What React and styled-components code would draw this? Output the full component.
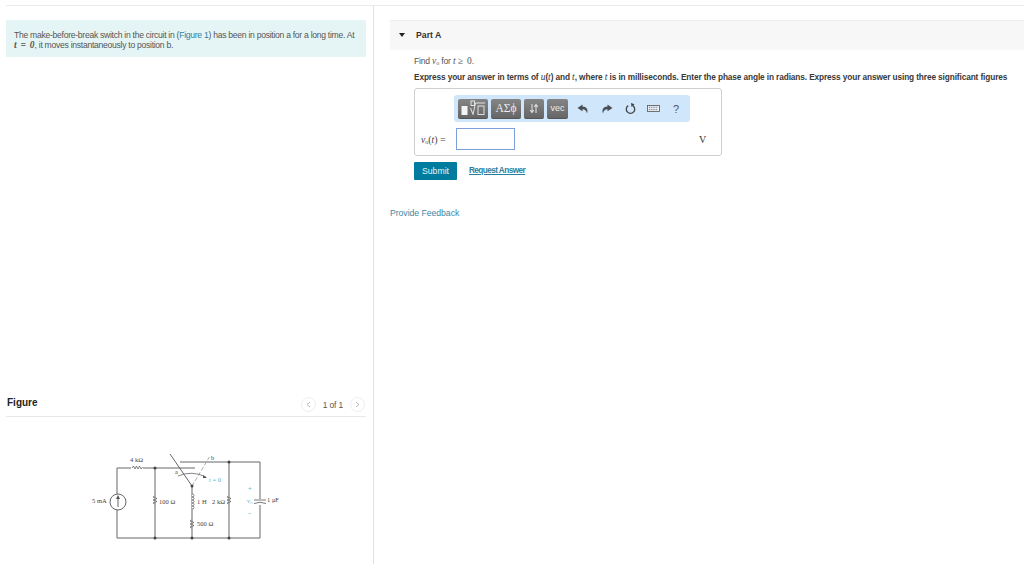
import React from 'react';
import styled, { createGlobalStyle } from 'styled-components';

const Global = createGlobalStyle`
  html, body { margin: 0; padding: 0; background: #fff; }
  body { font-family: "Liberation Sans", Arial, sans-serif; color: #333; overflow: hidden; }
`;

const Page = styled.div`
  width: 1024px;
  height: 564px;
  display: flex;
  flex-direction: column;
  padding: 5px 0 0 6px;
  box-sizing: border-box;
`;
const Main = styled.div`
  flex: 1;
  display: flex;
  border-top: 1px solid #e8ebee;
  min-height: 0;
`;
const LeftColumn = styled.div`
  width: 368px;
  box-sizing: border-box;
  border-right: 1px solid #dde2e8;
  display: flex;
  flex-direction: column;
  padding: 14px 7px 0 0;
`;
const Intro = styled.div`
  width: 360px;
  height: 37px;
  box-sizing: border-box;
  background: #e5f5f6;
  padding: 10px 0 0 8px;
  font-size: 8.6px;
  letter-spacing: -0.28px;
  line-height: 10px;
  color: #555;
`;
const FigureLink = styled.span`color: #2b7f9e;`;
const Math = styled.span`
  font-family: "Liberation Serif", serif;
  font-size: 9.5px;
  letter-spacing: 0;
  word-spacing: ${p => (p.$wide ? 1.5 : 0)}px;
  font-style: ${p => (p.$plain ? 'normal' : 'italic')};
  font-weight: ${p => (p.$bold ? 700 : 400)};
`;
const Sub = styled.sub`
  font-family: "Liberation Serif", serif;
  font-size: 6px;
  line-height: 0;
  vertical-align: -1px;
`;
const FigureHeader = styled.div`
  margin-top: auto;
  width: 360px;
  height: 21px;
  box-sizing: border-box;
  border-bottom: 1px solid #e6e8ea;
  display: flex;
  align-items: flex-start;
  justify-content: space-between;
`;
const FigureTitle = styled.div`
  font-size: 10px;
  font-weight: 700;
  line-height: 12px;
  color: #222;
  margin: 1px 0 0 1px;
`;
const Pager = styled.div`
  display: flex;
  align-items: center;
  gap: 7px;
  font-size: 8.4px;
  letter-spacing: -0.1px;
  color: #555;
  margin: 1px 1px 0 0;
`;
const PagerButton = styled.div`
  width: 13px;
  height: 13px;
  border-radius: 50%;
  border: 1px solid #eceef0;
  display: flex;
  align-items: center;
  justify-content: center;
`;
const FigureArea = styled.div`
  height: 147px;
  padding: 28px 0 0 84px;
  box-sizing: border-box;
`;
const RightColumn = styled.div`
  flex: 1;
  padding: 14px 0 0 16px;
  min-width: 0;
`;
const PartHeader = styled.div`
  height: 30px;
  background: #f7f7f7;
  border-top: 1px solid #eeeeee;
  box-sizing: border-box;
  display: flex;
  align-items: center;
  padding: 0 0 1px 9px;
  gap: 11px;
`;
const Caret = styled.div`
  width: 0;
  height: 0;
  border-left: 3.5px solid transparent;
  border-right: 3.5px solid transparent;
  border-top: 4px solid #222;
`;
const PartTitle = styled.div`
  font-size: 8.7px;
  font-weight: 700;
  color: #333;
`;
const PartBody = styled.div`
  padding: 6px 0 0 24px;
`;
const Prompt = styled.div`
  font-size: 8.6px;
  letter-spacing: -0.2px;
  line-height: 10px;
  color: #555;
`;
const Instruction = styled.div`
  font-size: 8.3px;
  letter-spacing: -0.12px;
  line-height: 10px;
  font-weight: 700;
  color: #3a3a3a;
  margin-top: 6px;
  white-space: nowrap;
`;
const AnswerBox = styled.div`
  width: 308px;
  height: 68px;
  box-sizing: border-box;
  margin-top: 6px;
  border: 1px solid #cfcfcf;
  border-radius: 3px;
  padding: 6px 0 0 6px;
`;
const ToolbarRow = styled.div`
  display: flex;
  justify-content: flex-start;
  padding-left: 33px;
`;
const Toolbar = styled.div`
  width: 236px;
  height: 27px;
  box-sizing: border-box;
  background: #cfe6fb;
  border-radius: 3px;
  display: flex;
  align-items: center;
  padding-left: 4px;
  gap: 3px;
`;
const ToolButton = styled.div`
  width: ${p => p.$w}px;
  height: 20px;
  box-sizing: border-box;
  border-radius: 2px;
  background: linear-gradient(#858585, #666);
  border-bottom: 1px solid #555;
  color: #eee;
  font-family: ${p => (p.$serif ? '"Liberation Serif", serif' : '"Liberation Sans", sans-serif')};
  font-size: ${p => (p.$serif ? 11.5 : 9)}px;
  display: flex;
  align-items: center;
  justify-content: center;
`;
const ToolIcon = styled.div`
  width: ${p => p.$w}px;
  height: 20px;
  display: flex;
  align-items: center;
  justify-content: center;
  font-size: 11px;
  color: #555;
`;
const InputRow = styled.div`
  display: flex;
  align-items: center;
  margin-top: 6px;
  height: 22px;
`;
const Label = styled.div`
  width: 35px;
  font-family: "Liberation Serif", serif;
  font-size: 10px;
  color: #444;
  white-space: nowrap;
`;
const Field = styled.div`
  width: 59px;
  height: 22px;
  box-sizing: border-box;
  border: 1px solid #7d9fdc;
`;
const Unit = styled.div`
  margin-left: 184px;
  font-family: "Liberation Serif", serif;
  font-size: 10px;
  color: #333;
`;
const Actions = styled.div`
  display: flex;
  align-items: center;
  margin-top: 6px;
  gap: 12px;
`;
const Submit = styled.div`
  width: 43px;
  height: 18px;
  background: #007c9e;
  border-radius: 1px;
  color: #e8f4f7;
  font-size: 8.7px;
  display: flex;
  align-items: center;
  justify-content: center;
`;
const RequestLink = styled.div`
  font-size: 8.2px;
  font-weight: 700;
  letter-spacing: -0.55px;
  color: #2b7f9e;
  text-decoration: underline;
  margin-top: -2px;
`;
const Feedback = styled.div`
  margin-top: 28px;
  font-size: 8.7px;
  letter-spacing: -0.05px;
  line-height: 10px;
  color: #3f87a3;
`;

const Chevron = ({ left }) => (
  <svg width="7" height="7" viewBox="0 0 7 7" fill="none" stroke="#bbb" strokeWidth="1">
    <path d={left ? 'M5 1 L2 3.5 L5 6' : 'M2 1 L5 3.5 L2 6'} />
  </svg>
);

const Resistor = ({ x, y }) => (
  <path d={`M${x} ${y} l-2 1 l4 1.5 l-4 1.5 l4 1.5 l-4 1.5 l2 1`} fill="#fff" stroke="#555" strokeWidth="0.7" />
);

const T = styled.text`
  font-family: "Liberation Serif", serif;
  font-size: 6.5px;
  fill: #444;
`;
const Teal = styled(T)`
  fill: #5cb5d0;
`;

const Circuit = () => (
  <svg width="200" height="100" viewBox="90 445 200 100">
    <g fill="none" stroke="#666" strokeWidth="1">
      <path d="M195 468 H117 V538 H260 V462 H180" />
      <path d="M155 468 V538" />
      <path d="M192 485 V538" />
      <path d="M229 462 V538" />
      <circle cx="118" cy="502" r="8" fill="#fff" />
      <path d="M118 507 V498" />
    </g>
    <path d="M118 495 l-2 4 h4 z" fill="#555" />
    <path d="M170 454 L192 486" stroke="#555" strokeWidth="0.9" fill="none" />
    <path d="M192 486 L210 456" stroke="#999" strokeWidth="0.8" strokeDasharray="4 2" fill="none" />
    <path d="M178 476 Q192 470 206 477" stroke="#555" strokeWidth="0.7" fill="none" />
    <path d="M207 478 l-4 -3 l0 3 z" fill="#555" />
    <g fill="#444">
      <circle cx="155" cy="468" r="1.5" /><circle cx="229" cy="462" r="1.5" /><circle cx="192" cy="486" r="1.5" />
      <circle cx="155" cy="538" r="1.5" /><circle cx="192" cy="538" r="1.5" /><circle cx="229" cy="538" r="1.5" />
    </g>
    <rect x="131" y="465" width="12" height="4" fill="#fff" />
    <path d="M132 468 l1.5 -2 l1.5 3 l1.5 -3 l1.5 3 l1.5 -3 l1.5 3 l1.5 -2" fill="none" stroke="#555" strokeWidth="0.7" />
    <Resistor x={155} y={496} />
    <Resistor x={229} y={496} />
    <Resistor x={192} y={520} />
    <path d="M192 494 a2 1.5 0 0 1 0 3 a2 1.5 0 0 1 0 3 a2 1.5 0 0 1 0 3 a2 1.5 0 0 1 0 3 a2 1.5 0 0 1 0 3" fill="#fff" stroke="#555" strokeWidth="0.7" />
    <rect x="254" y="499" width="12" height="6" fill="#fff" />
    <path d="M254 500 H266 M254 503.5 Q260 501 266 503.5" stroke="#555" strokeWidth="0.8" fill="none" />
    <T x="130" y="462">4 kΩ</T>
    <T x="92" y="503">5 mA</T>
    <T x="159" y="504">100 Ω</T>
    <T x="197" y="504">1 H</T>
    <T x="212" y="504">2 kΩ</T>
    <T x="197" y="526">500 Ω</T>
    <T x="175" y="474">a</T>
    <T x="211" y="460">b</T>
    <T x="267" y="502">1 μF</T>
    <Teal x="209" y="482">t = 0</Teal>
    <Teal x="247" y="503">v₀</Teal>
    <Teal x="248" y="491" fontWeight="700">+</Teal>
    <Teal x="248" y="516" fontWeight="700">−</Teal>
  </svg>
);

const Undo = ({ flip }) => (
  <svg width="12" height="10" viewBox="0 0 12 10" style={flip ? { transform: 'scaleX(-1)' } : undefined}>
    <path d="M5.5 0.5 L0.5 4 L5.5 7.2 V5.2 C8 5.2 9.2 6.5 10 9.5 C11.5 5.5 9.5 2.7 5.5 2.6 Z" fill="#4a4f55" />
  </svg>
);

export default function App() {
  return (
    <>
      <Global />
      <Page>
        <Main>
          <LeftColumn>
            <Intro>
              The make-before-break switch in the circuit in (<FigureLink>Figure 1</FigureLink>) has been in position a for a long time. At<br />
              <Math $bold $wide>t = 0</Math>, it moves instantaneously to position b.
            </Intro>
            <FigureHeader>
              <FigureTitle>Figure</FigureTitle>
              <Pager>
                <PagerButton><Chevron left /></PagerButton>
                <span>1 of 1</span>
                <PagerButton><Chevron /></PagerButton>
              </Pager>
            </FigureHeader>
            <FigureArea><Circuit /></FigureArea>
          </LeftColumn>
          <RightColumn>
            <PartHeader>
              <Caret />
              <PartTitle>Part A</PartTitle>
            </PartHeader>
            <PartBody>
              <Prompt>Find <Math>v</Math><Sub>o</Sub> for <Math>t</Math> <Math $plain $wide>≥ 0</Math>.</Prompt>
              <Instruction>
                Express your answer in terms of <Math>u</Math>(<Math>t</Math>) and <Math>t</Math>, where <Math>t</Math> is in milliseconds. Enter the phase angle in radians. Express your answer using three significant figures
              </Instruction>
              <AnswerBox>
                <ToolbarRow>
                  <Toolbar>
                    <ToolButton $w={30}>
                      <svg width="26" height="16" viewBox="0 0 26 16" fill="none" stroke="#eee" strokeWidth="0.9">
                        <rect x="1.5" y="6" width="6" height="9" fill="#f4f4f4" stroke="none" />
                        <rect x="11" y="1" width="3.5" height="4.5" />
                        <path d="M10.5 8 L13 14.5 L15.5 3 H25" />
                        <rect x="18" y="6" width="6" height="8.5" />
                      </svg>
                    </ToolButton>
                    <ToolButton $w={30} $serif>ΑΣϕ</ToolButton>
                    <ToolButton $w={20}>
                      <svg width="10" height="11" viewBox="0 0 10 11" fill="none" stroke="#ddd" strokeWidth="1.1">
                        <path d="M3 1 V9 M1.2 7 L3 9.5 L4.8 7 M7 10 V2 M5.2 4 L7 1.5 L8.8 4" />
                      </svg>
                    </ToolButton>
                    <ToolButton $w={21}>vec</ToolButton>
                    <ToolIcon $w={23}><Undo /></ToolIcon>
                    <ToolIcon $w={20}><Undo flip /></ToolIcon>
                    <ToolIcon $w={20}>
                      <svg width="11" height="12" viewBox="0 0 11 12" fill="none">
                        <path d="M3.2 2.6 A4.2 4.2 0 1 0 7.8 2.6" stroke="#3f4448" strokeWidth="1.3" />
                        <path d="M6 0 L9.5 1.2 L6.5 4 Z" fill="#3f4448" />
                      </svg>
                    </ToolIcon>
                    <ToolIcon $w={20}>
                      <svg width="13" height="7" viewBox="0 0 13 7" fill="#e8eef5" stroke="#555" strokeWidth="0.8">
                        <rect x="0.5" y="0.5" width="12" height="6" />
                        <path d="M2 2.3 H11 M2 4.6 H11" strokeDasharray="1 0.8" />
                      </svg>
                    </ToolIcon>
                    <ToolIcon $w={20}>?</ToolIcon>
                  </Toolbar>
                </ToolbarRow>
                <InputRow>
                  <Label><Math>v</Math><Sub>o</Sub>(<Math>t</Math>) =</Label>
                  <Field />
                  <Unit>V</Unit>
                </InputRow>
              </AnswerBox>
              <Actions>
                <Submit>Submit</Submit>
                <RequestLink>Request Answer</RequestLink>
              </Actions>
            </PartBody>
            <Feedback>Provide Feedback</Feedback>
          </RightColumn>
        </Main>
      </Page>
    </>
  );
}
